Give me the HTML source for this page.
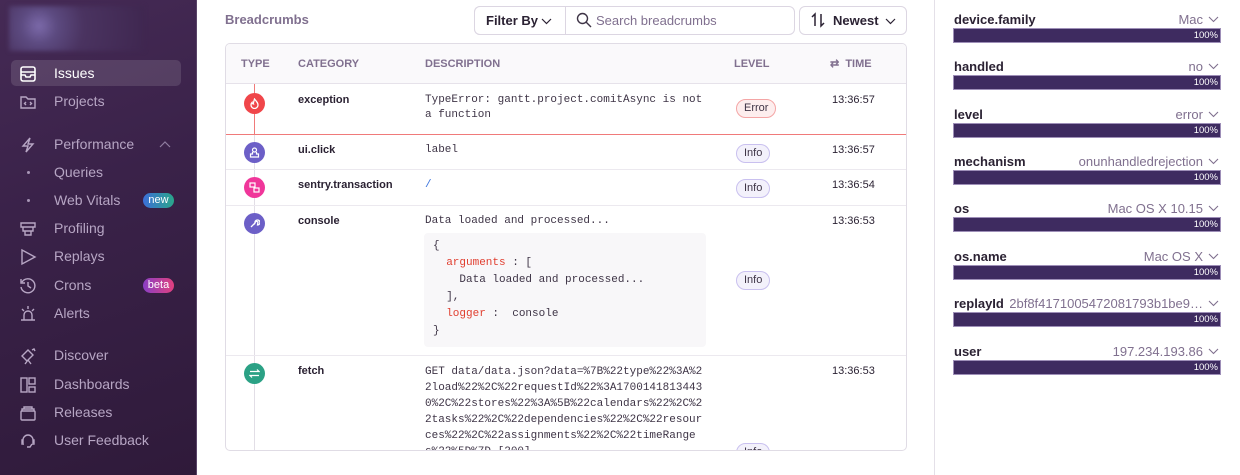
<!DOCTYPE html>
<html><head><meta charset="utf-8"><style>
*{box-sizing:border-box;margin:0;padding:0}
body{width:1240px;height:475px;overflow:hidden;background:#fff;font-family:"Liberation Sans",sans-serif;position:relative;color:#2b2233}
.sb{position:absolute;left:0;top:0;width:197px;height:475px;background:linear-gradient(160deg,#452a55 0%,#3a2249 40%,#2f1a3a 100%);border-right:1px solid #5a4468}
.logo{position:absolute;left:9px;top:6px;width:135px;height:45px;background:radial-gradient(circle at 30px 20px,#7c6aaa 0,#5c4a80 18px,#4a3360 45px,#3f2750 100%);filter:blur(2px);border-radius:2px}
.nav{position:absolute;left:0;width:197px;height:26px;color:#b7a6c4;font-size:14px;line-height:26px}
.nav .t{position:absolute;left:54px}
.nav svg{position:absolute;left:19px;top:5px}
.nav.act{left:11px;width:170px;background:rgba(255,255,255,.12);border-radius:5px;color:#fff}
.nav.act .t{left:43px}.nav.act svg{left:8px}
.dot{position:absolute;left:27px;top:12px;width:3px;height:3px;border-radius:50%;background:#a896b6}
.badge{position:absolute;left:143px;top:6px;width:31px;height:15px;border-radius:8px;font-size:11px;line-height:15px;text-align:center;color:#fff}
.main{position:absolute;left:198px;top:0;width:737px;height:475px;border-right:1px solid #e4e0e8}
.title{position:absolute;left:225px;top:12px;font-size:13px;font-weight:bold;color:#80708f}
.btn{position:absolute;border:1px solid #dcd6e2;border-radius:6px;height:29px;top:6px;font-size:13px;line-height:27px;background:#fff}
.chev{display:inline-block;vertical-align:middle;margin-left:3px}
.tbl{position:absolute;left:225px;top:43px;width:682px;height:408px;border:1px solid #e0dce5;border-radius:5px;overflow:hidden}
.hd{position:absolute;left:0;top:0;width:100%;height:40px;background:#faf9fb;border-bottom:1px solid #e6e2ea;font-size:11px;font-weight:bold;color:#80708f;line-height:40px}
.hd span{position:absolute}
.row{position:absolute;left:0;width:100%;border-bottom:1px solid #ece9ef}
.cat{position:absolute;left:72px;top:10px;font-size:11px;font-weight:bold;color:#2b2233}
.desc{position:absolute;left:199px;top:9px;font-family:"Liberation Mono",monospace;font-size:11px;line-height:15px;color:#3e3446;width:285px;word-break:break-all}
.tm{position:absolute;left:606px;top:10px;font-size:11px;color:#2b2233}
.lv{position:absolute;left:510px;height:19px;border-radius:10px;font-size:11px;line-height:17px;padding:0 7px;border:1px solid #c9c0ef;background:#f3f1fb;color:#3e3446}
.ic{position:absolute;left:18px;top:8px;width:21px;height:21px;border-radius:50%}
.ic svg{position:absolute;left:5px;top:5px}
.vl{position:absolute;left:28px;width:1px;background:#e2dee6}
.tag{position:absolute;left:953px;width:268px;height:32px}
.tag .k{position:absolute;left:1px;top:0;font-size:13px;line-height:15px;font-weight:bold;color:#2b2233;background:#fff;z-index:2;padding-right:6px}
.tag .v{position:absolute;right:2px;top:0;font-size:13px;line-height:15px;color:#80708f;white-space:nowrap}
.tag .v svg{vertical-align:1px;margin-left:5px}
.tag .bar{position:absolute;left:0;top:16px;width:268px;height:15px;background:#3e2b60;border:1px solid #9e8fb8;color:#fff;font-size:9.5px;text-align:right;padding-right:2px;line-height:14px}
</style></head><body>
<div class="sb">
<div class="logo"></div>
<div class="nav act" style="top:60px"><svg width="18" height="18" viewBox="0 0 18 18" fill="none" stroke="#fff" stroke-width="1.6"><rect x="2" y="2" width="14" height="14" rx="2"/><path d="M2 7h14M2 10h4l1 2h4l1-2h4"/></svg><span class="t">Issues</span></div>
<div class="nav" style="top:88px"><svg width="18" height="18" viewBox="0 0 18 18" fill="none" stroke="#b7a6c4" stroke-width="1.4"><path d="M2 4v11h14V6H9L7 4z"/><path d="M7 9l-1.5 1.5L7 12M11 9l1.5 1.5L11 12"/></svg><span class="t">Projects</span></div>
<div class="nav" style="top:131px"><svg width="18" height="18" viewBox="0 0 18 18" fill="none" stroke="#b7a6c4" stroke-width="1.4"><path d="M11 2L4 10h5l-2 6 7-8H9z"/></svg><span class="t">Performance</span><svg style="left:159px;top:10px" width="12" height="7" viewBox="0 0 12 7" fill="none" stroke="#8f7da0" stroke-width="1.2"><path d="M1 6l5-5 5 5"/></svg></div>
<div class="nav" style="top:159px"><span class="dot"></span><span class="t">Queries</span></div>
<div class="nav" style="top:187px"><span class="dot"></span><span class="t">Web Vitals</span><span class="badge" style="background:linear-gradient(90deg,#3c6fd8,#2aa68a)">new</span></div>
<div class="nav" style="top:215px"><svg width="18" height="18" viewBox="0 0 18 18" fill="none" stroke="#b7a6c4" stroke-width="1.4"><path d="M2 3h14v4H2zM4 7h10v4H4zM6 11h6v4H6z"/></svg><span class="t">Profiling</span></div>
<div class="nav" style="top:243px"><svg width="18" height="18" viewBox="0 0 18 18" fill="none" stroke="#b7a6c4" stroke-width="1.4"><path d="M3 2l13 7-13 7z"/></svg><span class="t">Replays</span></div>
<div class="nav" style="top:272px"><svg width="18" height="18" viewBox="0 0 18 18" fill="none" stroke="#b7a6c4" stroke-width="1.4"><path d="M3 5a7 7 0 1 1-1 5M2 2v4h4M9 5v4l3 2"/></svg><span class="t">Crons</span><span class="badge" style="background:linear-gradient(90deg,#8a3fc4,#e0407f)">beta</span></div>
<div class="nav" style="top:300px"><svg width="18" height="18" viewBox="0 0 18 18" fill="none" stroke="#b7a6c4" stroke-width="1.4"><path d="M5 15v-5a4 4 0 0 1 8 0v5M2 15h14M9 1v3M3 4l2 2M15 4l-2 2"/></svg><span class="t">Alerts</span></div>
<div class="nav" style="top:342px"><svg width="18" height="18" viewBox="0 0 18 18" fill="none" stroke="#b7a6c4" stroke-width="1.4"><path d="M3 9l6-6 5 5-6 6zM9 13l-3 4M9 13l3 4M13 3l2-1 1 2"/></svg><span class="t">Discover</span></div>
<div class="nav" style="top:371px"><svg width="18" height="18" viewBox="0 0 18 18" fill="none" stroke="#b7a6c4" stroke-width="1.4"><rect x="2" y="2" width="6" height="14"/><rect x="10" y="2" width="6" height="6"/><rect x="10" y="11" width="6" height="5"/></svg><span class="t">Dashboards</span></div>
<div class="nav" style="top:399px"><svg width="18" height="18" viewBox="0 0 18 18" fill="none" stroke="#b7a6c4" stroke-width="1.4"><rect x="2" y="7" width="14" height="9" rx="1"/><path d="M3 7V5h12v2M5 5V3h8v2"/></svg><span class="t">Releases</span></div>
<div class="nav" style="top:427px"><svg width="18" height="18" viewBox="0 0 18 18" fill="none" stroke="#b7a6c4" stroke-width="1.4"><path d="M4 11V8a5 5 0 0 1 10 0v3M4 8H3v4h2M14 8h1v4h-2M13 12l-2 3H8"/></svg><span class="t">User Feedback</span></div>
</div>

<div class="main"></div>
<div class="title">Breadcrumbs</div>
<div class="btn" style="left:474px;width:321px;"></div>
<div class="btn" style="left:474px;width:91px;border-right:none;border-radius:6px 0 0 6px;font-weight:bold;padding-left:11px;color:#2b2233">Filter By<svg class="chev" width="11" height="7" viewBox="0 0 11 7" fill="none" stroke="#2b2233" stroke-width="1.2"><path d="M1 1l4.5 4.5L10 1"/></svg></div>
<div style="position:absolute;left:565px;top:6px;width:1px;height:29px;background:#dcd6e2"></div>
<svg style="position:absolute;left:576px;top:12px" width="16" height="16" viewBox="0 0 16 16" fill="none" stroke="#3e3446" stroke-width="1.4"><circle cx="6.5" cy="6.5" r="5"/><path d="M10 10l5 5"/></svg>
<div style="position:absolute;left:596px;top:13px;font-size:13px;color:#80708f">Search breadcrumbs</div>
<div class="btn" style="left:799px;width:108px;font-weight:bold;padding-left:33px;color:#2b2233">Newest<svg class="chev" style="margin-left:6px" width="11" height="7" viewBox="0 0 11 7" fill="none" stroke="#2b2233" stroke-width="1.2"><path d="M1 1l4.5 4.5L10 1"/></svg></div>
<svg style="position:absolute;left:810px;top:12px" width="16" height="16" viewBox="0 0 16 16" fill="none" stroke="#2b2233" stroke-width="1.5"><path d="M5 14V2L2 5M11 2v12l3-3"/></svg>

<div class="tbl">
<div class="hd"><span style="left:15px">TYPE</span><span style="left:72px">CATEGORY</span><span style="left:199px">DESCRIPTION</span><span style="left:508px">LEVEL</span><span style="left:604px">⇄ &nbsp;TIME</span></div>
<div class="vl" style="top:40px;height:370px"></div>
<div class="vl" style="top:40px;height:51px;background:#f07a7a"></div>
<div class="row" style="top:40px;height:51px;border-bottom:1.5px solid #f07a7a">
<div class="ic" style="background:#f0464a;top:9px"><svg width="11" height="11" viewBox="0 0 11 11" fill="none" stroke="#fff" stroke-width="1.3"><path d="M5.5 1C8 4 9 5 9 7a3.5 3.5 0 0 1-7 0c0-1 .5-2 1-2.5 0 1 1 1.5 1.5 1.5C4 5 5 3 5.5 1z"/></svg></div>
<div class="cat">exception</div><div class="desc" style="width:290px">TypeError: gantt.project.comitAsync is not a function</div>
<div class="lv" style="top:15px;border-color:#f4a5a5;background:#fdeeee">Error</div><div class="tm">13:36:57</div></div>
<div class="row" style="top:91px;height:35px">
<div class="ic" style="background:#6c5fc7;top:7px"><svg width="11" height="11" viewBox="0 0 11 11" fill="none" stroke="#fff" stroke-width="1.2"><circle cx="5.5" cy="3" r="2"/><path d="M3.5 5v2h-2v3h8V7h-2V5"/></svg></div>
<div class="cat" style="top:9px">ui.click</div><div class="desc" style="top:8px">label</div>
<div class="lv" style="top:9px">Info</div><div class="tm" style="top:9px">13:36:57</div></div>
<div class="row" style="top:126px;height:36px">
<div class="ic" style="background:#f0369a;top:7px"><svg width="11" height="11" viewBox="0 0 11 11" fill="none" stroke="#fff" stroke-width="1.2"><rect x="1" y="1" width="5" height="4"/><rect x="5" y="6" width="5" height="4"/></svg></div>
<div class="cat" style="top:9px">sentry.transaction</div><div class="desc" style="top:8px;color:#3c74dd">/</div>
<div class="lv" style="top:9px">Info</div><div class="tm" style="top:9px">13:36:54</div></div>
<div class="row" style="top:162px;height:150px">
<div class="ic" style="background:#6c5fc7;top:7px"><svg width="11" height="11" viewBox="0 0 11 11" fill="none" stroke="#fff" stroke-width="1.3"><path d="M2 9l4-4M6 5a2.5 2.5 0 1 1 2.5 2L9 4 7 3z"/></svg></div>
<div class="cat" style="top:9px">console</div><div class="desc" style="top:8px">Data loaded and processed...</div>
<div style="position:absolute;left:198px;top:27px;width:282px;height:114px;background:#f8f7f9;border-radius:4px;font-family:'Liberation Mono',monospace;font-size:11px;line-height:17px;color:#3e3446;padding:5px 0 0 9px;white-space:pre">{
  <span style="color:#e03e2f">arguments</span> : [
    Data loaded and processed...
  ],
  <span style="color:#e03e2f">logger</span> :  console
}</div>
<div class="lv" style="top:65px">Info</div><div class="tm" style="top:9px">13:36:53</div></div>
<div class="row" style="top:312px;height:100px;border-bottom:none">
<div class="ic" style="background:#2ba185;top:7px"><svg width="11" height="11" viewBox="0 0 11 11" fill="none" stroke="#fff" stroke-width="1.2"><path d="M1 3.5h9L8 1.5M10 7.5H1l2 2"/></svg></div>
<div class="cat" style="top:9px">fetch</div><div class="desc" style="top:8px;width:280px;line-height:16px">GET data/data.json?data=%7B%22type%22%3A%22load%22%2C%22requestId%22%3A17001418134430%2C%22stores%22%3A%5B%22calendars%22%2C%22tasks%22%2C%22dependencies%22%2C%22resources%22%2C%22assignments%22%2C%22timeRanges%22%5D%7D [200]</div>
<div class="lv" style="top:87px">Info</div><div class="tm" style="top:9px">13:36:53</div></div>
</div>
<div style="position:absolute;left:198px;top:451px;width:736px;height:24px;background:#fff"></div>

<div class="tag" style="top:12px"><span class="k">device.family</span><span class="v">Mac<svg width="11" height="7" viewBox="0 0 11 7" fill="none" stroke="#80708f" stroke-width="1.1"><path d="M1 1l4.5 4.5L10 1"/></svg></span><div class="bar">100%</div></div>
<div class="tag" style="top:59px"><span class="k">handled</span><span class="v">no<svg width="11" height="7" viewBox="0 0 11 7" fill="none" stroke="#80708f" stroke-width="1.1"><path d="M1 1l4.5 4.5L10 1"/></svg></span><div class="bar">100%</div></div>
<div class="tag" style="top:107px"><span class="k">level</span><span class="v">error<svg width="11" height="7" viewBox="0 0 11 7" fill="none" stroke="#80708f" stroke-width="1.1"><path d="M1 1l4.5 4.5L10 1"/></svg></span><div class="bar">100%</div></div>
<div class="tag" style="top:154px"><span class="k">mechanism</span><span class="v">onunhandledrejection<svg width="11" height="7" viewBox="0 0 11 7" fill="none" stroke="#80708f" stroke-width="1.1"><path d="M1 1l4.5 4.5L10 1"/></svg></span><div class="bar">100%</div></div>
<div class="tag" style="top:201px"><span class="k">os</span><span class="v">Mac OS X 10.15<svg width="11" height="7" viewBox="0 0 11 7" fill="none" stroke="#80708f" stroke-width="1.1"><path d="M1 1l4.5 4.5L10 1"/></svg></span><div class="bar">100%</div></div>
<div class="tag" style="top:249px"><span class="k">os.name</span><span class="v">Mac OS X<svg width="11" height="7" viewBox="0 0 11 7" fill="none" stroke="#80708f" stroke-width="1.1"><path d="M1 1l4.5 4.5L10 1"/></svg></span><div class="bar">100%</div></div>
<div class="tag" style="top:296px"><span class="k">replayId</span><span class="v">2bf8f4171005472081793b1be9…<svg width="11" height="7" viewBox="0 0 11 7" fill="none" stroke="#80708f" stroke-width="1.1"><path d="M1 1l4.5 4.5L10 1"/></svg></span><div class="bar">100%</div></div>
<div class="tag" style="top:344px"><span class="k">user</span><span class="v">197.234.193.86<svg width="11" height="7" viewBox="0 0 11 7" fill="none" stroke="#80708f" stroke-width="1.1"><path d="M1 1l4.5 4.5L10 1"/></svg></span><div class="bar">100%</div></div>
</body></html>
